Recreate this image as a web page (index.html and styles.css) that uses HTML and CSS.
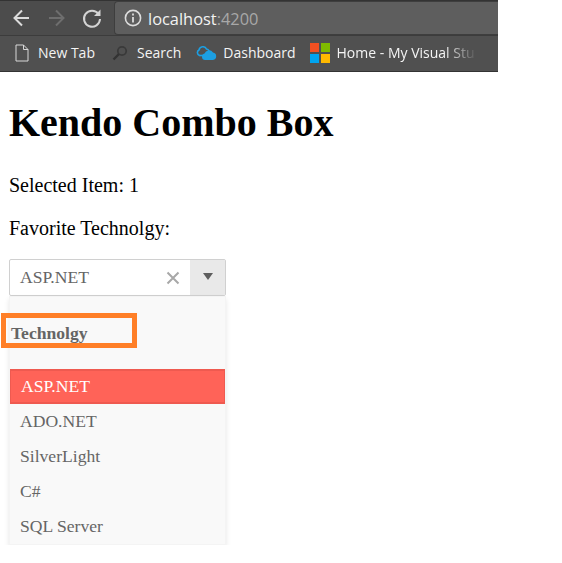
FILE: index.html
```html
<!DOCTYPE html>
<html lang="en">
<head>
<meta charset="utf-8">
<title>Kendo Combo Box</title>
<link rel="stylesheet" href="styles.css">
</head>
<body>
<header class="browser">
  <div class="toolbar">
    <svg class="nav" width="24" height="24" viewBox="0 0 24 24"><path d="M19 12H5M12 4.500L4.500 12L12 19.500" fill="none" stroke="#dcdcdc" stroke-width="2"/></svg>
    <svg class="nav" width="24" height="24" viewBox="0 0 24 24"><path d="M5 12H19M12 4.500L19.500 12L12 19.500" fill="none" stroke="#6e6e6e" stroke-width="2"/></svg>
    <svg class="nav nav-reload" width="24" height="24" viewBox="0 0 24 24"><path d="M18.500 8A8 8 0 1 0 20 13" fill="none" stroke="#d4d4d4" stroke-width="2"/><path d="M20.500 3.500V10H14Z" fill="#d4d4d4"/></svg>
    <div class="omnibox">
      <svg width="18" height="18" viewBox="0 0 18 18"><circle cx="9" cy="9" r="7.600" fill="none" stroke="#dcdcdc" stroke-width="1.600"/><path d="M9 8V13.500M9 4.500V6.500" stroke="#dcdcdc" stroke-width="1.800"/></svg>
      <span class="host">localhost</span><span class="port">:4200</span>
    </div>
  </div>
  <div class="bookmarks">
    <span class="bm bm-newtab"><svg width="14" height="18" viewBox="0 0 14 18"><path d="M1 1H8.500L13 5.500V17H1ZM8.500 1V5.500H13" fill="none" stroke="#d8d8d8" stroke-width="1"/></svg>New Tab</span>
    <span class="bm bm-search"><svg width="16" height="16" viewBox="0 0 16 16"><circle cx="10" cy="6" r="4.200" fill="none" stroke="#3a3a3a" stroke-width="1.800"/><path d="M7 9L1.500 14.500" stroke="#333" stroke-width="2.400"/></svg>Search</span>
    <span class="bm bm-dash"><svg width="21" height="14" viewBox="0 0 21 14"><path d="M3.500 9.500A3 3 0 0 1 3 4A4 4 0 0 1 10.500 3A3 3 0 0 1 13 5" fill="none" stroke="#1c9fe2" stroke-width="1.600"/><path d="M3 9.500H8" stroke="#1c9fe2" stroke-width="1.600"/><path d="M9 14A3.300 3.300 0 0 1 8.500 7.500A4.800 4.800 0 0 1 17 6.500A3.800 3.800 0 0 1 17 14Z" fill="#1c9fe2"/></svg>Dashboard</span>
    <span class="bm"><span class="ms-logo"><i class="ms-r"></i><i class="ms-g"></i><i class="ms-b"></i><i class="ms-y"></i></span><span class="fade">Home - My Visual Stu</span></span>
  </div>
</header>
<main class="page">
  <h1>Kendo Combo Box</h1>
  <p>Selected Item: 1</p>
  <p>Favorite Technolgy:</p>
  <div class="combo">
    <span class="combo-value">ASP.NET</span>
    <svg class="combo-clear" width="14" height="14" viewBox="0 0 14 14"><path d="M1.500 1.500L12.500 12.500M12.500 1.500L1.500 12.500" stroke="#a8a8a8" stroke-width="2"/></svg>
    <span class="combo-btn"><i class="caret"></i></span>
  </div>
  <div class="popup">
    <div class="popup-header">Technolgy</div>
    <ul class="list">
      <li class="selected">ASP.NET</li>
      <li>ADO.NET</li>
      <li>SilverLight</li>
      <li>C#</li>
      <li>SQL Server</li>
    </ul>
    <div class="callout"></div>
  </div>
</main>
</body>
</html>
```
FILE: styles.css
```css
* { box-sizing: border-box; }
html, body { margin: 0; padding: 0; background: #fff; }
body { font-family: "Liberation Serif", "Times New Roman", serif; font-size: 20px; color: #000; overflow: hidden; }

.browser { width: 498px; height: 72px; background: #505050; font-family: "Open Sans", "Noto Sans", sans-serif; border-top: 1px solid #333; border-bottom: 1px solid #333; }
.toolbar { height: 35px; display: flex; align-items: center; padding-left: 10px; gap: 11px; border-bottom: 1px solid #3c3c3c; background: #4c4c4c; }
.nav { flex: none; margin-right: -1px; }
.nav-reload { margin-left: 2px; margin-right: -3px; }
.omnibox { flex: 1; height: 34px; margin-left: 2px; background: #5e5e5e; border: 1px solid #3e3e3e; border-right: 0; border-radius: 4px 0 0 4px; display: flex; align-items: center; padding-left: 9px; font-size: 16.400px; }
.omnibox svg { margin-right: 6px; }
.host { color: #f2f2f2; }
.port { color: #a8a8a8; }

.bookmarks { height: 35px; display: flex; align-items: center; padding: 0 0 2px 15px; font-size: 14px; color: #f4f4f4; white-space: nowrap; }
.bm { display: flex; align-items: center; }
.bm-newtab svg { margin-right: 9px; }
.bm-search { margin-left: 17px; }
.bm-search svg { margin-right: 9px; }
.bm-dash { margin-left: 15px; }
.bm-dash svg { margin-right: 6px; }
.bm:last-child { margin-left: 14px; }
.ms-logo { display: grid; grid-template-columns: 9px 9px; grid-template-rows: 9px 9px; gap: 2px; margin-right: 7px; width: 20px; height: 20px; }
.ms-logo i { display: block; }
.ms-r { background: #f25022; }
.ms-g { background: #7fba00; }
.ms-b { background: #00a4ef; }
.ms-y { background: #ffb900; }
.fade { -webkit-mask-image: linear-gradient(to right, #000 78%, rgba(0,0,0,.1)); mask-image: linear-gradient(to right, #000 78%, rgba(0,0,0,.1)); }

.page { padding: 0 9px; }
h1 { margin: 29px 0 0; font-size: 40px; line-height: 44px; font-weight: bold; }
p { margin: 0; line-height: 21px; }
h1 + p { margin-top: 30px; }
p + p { margin-top: 22px; }

.combo { width: 217px; height: 37px; margin-top: 20px; border: 1px solid #d0d0d0; border-radius: 2px; display: flex; align-items: center; color: #656565; font-size: 17.600px; }
.combo-value { flex: 1; padding-left: 10px; }
.combo-clear { margin-right: 10px; }
.combo-btn { width: 35px; height: 100%; background: #e9e9e9; display: flex; align-items: center; justify-content: center; }
.caret { width: 0; height: 0; border-left: 5px solid transparent; border-right: 5px solid transparent; border-top: 7px solid #5e5e5e; margin-top: -2px; }

.popup { position: relative; width: 217px; height: 249px; background: #f9f9f9; color: #656565; font-size: 17.600px; box-shadow: 0 3px 5px rgba(0,0,0,.1); border: 1px solid #f4f4f4; }
.popup-header { font-weight: bold; padding: 26px 0 0 1px; height: 72px; line-height: 21px; }
.list { list-style: none; margin: 0; padding: 0; }
.list li { height: 35px; line-height: 35px; padding-left: 10px; }
.list .selected { background: #ff6358; color: #fff; border: 2px solid #ef5a50; border-left-width: 1px; border-right-width: 1px; padding-left: 10px; line-height: 31px; }
.callout { position: absolute; left: -9px; top: 16px; width: 136px; height: 35px; border: 5px solid #ff7f27; }
```
